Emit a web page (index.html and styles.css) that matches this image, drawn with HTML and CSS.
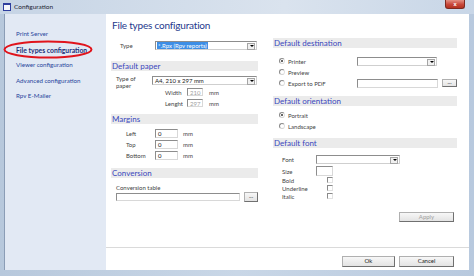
FILE: index.html
```html
<!DOCTYPE html>
<html>
<head>
<meta charset="utf-8">
<link rel="stylesheet" href="styles.css">
</head>
<body>
<div class="window">
  <div class="titlebar">
    <span class="app-icon"></span>
    <span class="title">Configuration</span>
    <span class="spacer"></span>
    <span class="close">x</span>
  </div>
  <div class="body">
    <div class="sidebar">
      <div class="nav">Print Server</div>
      <div class="nav active">File types configuration</div>
      <div class="nav">Viewer configuration</div>
      <div class="nav">Advanced configuration</div>
      <div class="nav">Rpv E-Mailer</div>
    </div>
    <div class="content">
      <div class="columns">
        <div class="col-left">
          <div class="heading">File types configuration</div>
          <div class="type-row">
            <span class="lbl type-lbl">Type</span>
            <div class="combo type-combo"><span class="sel">*.Rpx (Rpv reports)</span></div>
          </div>
          <div class="bar paper-bar">Default paper</div>
          <div class="paper-row">
            <div class="lbl paper-lbl">Type of<br>paper</div>
            <div class="paper-fields">
              <div class="combo paper-combo">A4, 210 x 297 mm</div>
              <div class="dim-row">
                <span class="lbl dim-lbl">Width</span>
                <div class="input dim-input disabled">210</div>
                <span class="lbl unit">mm</span>
              </div>
              <div class="dim-row">
                <span class="lbl dim-lbl">Lenght</span>
                <div class="input dim-input disabled">297</div>
                <span class="lbl unit">mm</span>
              </div>
            </div>
          </div>
          <div class="bar margins-bar">Margins</div>
          <div class="margin-row first">
            <span class="lbl margin-lbl">Left</span>
            <div class="input margin-input">0</div>
            <span class="lbl unit2">mm</span>
          </div>
          <div class="margin-row">
            <span class="lbl margin-lbl">Top</span>
            <div class="input margin-input">0</div>
            <span class="lbl unit2">mm</span>
          </div>
          <div class="margin-row">
            <span class="lbl margin-lbl">Bottom</span>
            <div class="input margin-input">0</div>
            <span class="lbl unit2">mm</span>
          </div>
          <div class="bar conv-bar">Conversion</div>
          <div class="lbl conv-lbl">Conversion table</div>
          <div class="conv-row">
            <div class="input conv-input"></div>
            <div class="btn dots">...</div>
          </div>
        </div>
        <div class="col-right">
          <div class="bar dest-bar">Default destination</div>
          <div class="radio-row first">
            <span class="radio checked"></span><span class="lbl radio-lbl">Printer</span>
            <div class="combo dest-combo"></div>
          </div>
          <div class="radio-row">
            <span class="radio"></span><span class="lbl radio-lbl">Preview</span>
          </div>
          <div class="radio-row">
            <span class="radio"></span><span class="lbl radio-lbl">Export to PDF</span>
            <div class="input pdf-input"></div>
            <div class="btn dots pdf-dots">...</div>
          </div>
          <div class="bar orient-bar">Default orientation</div>
          <div class="radio-row first-o">
            <span class="radio checked"></span><span class="lbl radio-lbl">Portrait</span>
          </div>
          <div class="radio-row">
            <span class="radio"></span><span class="lbl radio-lbl">Landscape</span>
          </div>
          <div class="bar font-bar">Default font</div>
          <div class="font-row">
            <span class="lbl font-lbl">Font</span>
            <div class="combo font-combo"></div>
          </div>
          <div class="size-row">
            <span class="lbl font-lbl">Size</span>
            <div class="input size-input"></div>
          </div>
          <div class="check-row">
            <span class="lbl check-lbl">Bold</span><span class="check"></span>
          </div>
          <div class="check-row">
            <span class="lbl check-lbl">Underline</span><span class="check"></span>
          </div>
          <div class="check-row">
            <span class="lbl check-lbl">Italic</span><span class="check"></span>
          </div>
          <div class="apply-row">
            <div class="btn apply disabled-btn">Apply</div>
          </div>
        </div>
      </div>
      <div class="footer">
        <div class="btn foot-btn ok">Ok</div>
        <div class="btn foot-btn cancel">Cancel</div>
      </div>
    </div>
  </div>
  <svg class="highlight" width="90" height="19" viewBox="0 0 90 19">
    <ellipse cx="45" cy="9.5" rx="43.5" ry="8" fill="none" stroke="#e0141c" stroke-width="2"/>
  </svg>
</div>
</body>
</html>
```
FILE: styles.css
```css
* { box-sizing: border-box; }
html, body { margin: 0; padding: 0; }
body {
  width: 474px;
  height: 276px;
  overflow: hidden;
  font-family: Lato, "Open Sans", "DejaVu Sans", sans-serif;
  background: #a9bdd4;
}
.window {
  position: relative;
  width: 474px;
  height: 276px;
  display: flex;
  flex-direction: column;
  background: linear-gradient(to right, #b7c8dc 0%, #c9d7e7 50%, #b8c9de 100%);
}
.titlebar {
  height: 14px;
  display: flex;
  align-items: flex-start;
  background: linear-gradient(to right, #c6d4e5, #dae3ee 60%, #c8d6e7);
  padding-left: 3px;
}
.app-icon {
  width: 8px;
  height: 8px;
  margin-top: 3px;
  border: 1px solid #2d3d9e;
  border-top-width: 2px;
  background: #f4f6fb;
}
.title {
  font-size: 6.5px;
  line-height: 8px;
  margin-top: 3px;
  color: #1d2533;
  margin-left: 3px;
}
.spacer { flex: 1; }
.close {
  width: 20px;
  height: 9px;
  margin-right: 9px;
  background: linear-gradient(#e39083, #c8473a 55%, #b3321f);
  border: 1px solid #7d2a20;
  border-top: none;
  border-radius: 0 0 3px 3px;
  color: #fff;
  font-size: 6px;
  line-height: 8px;
  text-align: center;
  font-weight: bold;
}
.body {
  flex: 1;
  display: flex;
  margin: 0 5px 6px 4px;
  border-left: 1px solid #8b9db6;
}
.sidebar {
  width: 101px;
  background: #e2e9f4;
  padding: 16px 0 0 11px;
  display: flex;
  flex-direction: column;
  gap: 7.5px;
}
.nav {
  font-size: 6.2px;
  line-height: 8px;
  color: #28469c;
  white-space: nowrap;
}
.nav.active { font-weight: bold; font-size: 6.8px; color: #1b2f78; }
.content {
  flex: 1;
  background: #fff;
  display: flex;
  flex-direction: column;
}
.columns {
  height: 233px;
  display: flex;
  padding-left: 5px;
  gap: 15px;
}
.col-left { width: 147px; display: flex; flex-direction: column; }
.col-right { width: 184px; display: flex; flex-direction: column; }
.lbl {
  font-size: 6px;
  line-height: 7px;
  color: #444;
  white-space: nowrap;
}
.heading {
  margin-top: 5px;
  padding-left: 1px;
  font-size: 10px;
  letter-spacing: -0.2px;
  line-height: 12px;
  color: #24398c;
  white-space: nowrap;
}
.bar {
  height: 10px;
  background: #ebebeb;
  font-size: 8px;
  line-height: 10px;
  color: #3a47bd;
  padding-left: 1px;
  white-space: nowrap;
}
.combo {
  position: relative;
  height: 9px;
  border: 1px solid #8d8d8d;
  border-right-color: #cfcfcf;
  border-bottom-color: #cfcfcf;
  background: #fff;
  font-size: 6px;
  line-height: 7px;
  padding-left: 2px;
  color: #222;
  white-space: nowrap;
}
.combo::after {
  content: "";
  position: absolute;
  right: 1px;
  top: 1px;
  width: 6px;
  height: 5px;
  background: #f0f0f0;
  border: 1px solid #a5a5a5;
}
.combo::before {
  content: "";
  position: absolute;
  right: 2.5px;
  top: 3px;
  z-index: 1;
  border-left: 2px solid transparent;
  border-right: 2px solid transparent;
  border-top: 2px solid #000;
}
.input {
  height: 9px;
  border: 1px solid #8d8d8d;
  border-right-color: #d8d8d8;
  border-bottom-color: #d8d8d8;
  background: #fff;
  font-size: 6px;
  line-height: 7px;
  padding-left: 2px;
  color: #111;
}
.input.disabled { color: #a0a0a0; }
.type-row {
  margin-top: 10px;
  display: flex;
  align-items: center;
  padding-left: 9px;
}
.type-lbl { width: 35px; }
.type-combo { width: 102px; padding-left: 1px; }
.sel {
  background: #3d8ee6;
  color: #fff;
  padding: 0 1px;
}
.paper-bar { margin-top: 11px; }
.paper-row {
  margin-top: 5px;
  display: flex;
  padding-left: 5px;
}
.paper-lbl { width: 36px; margin-top: -1px; }
.paper-fields { width: 105px; }
.paper-combo { width: 105px; }
.dim-row {
  display: flex;
  align-items: center;
  padding-left: 13px;
  margin-top: 3px;
}
.dim-lbl { width: 22px; }
.dim-input { width: 16px; height: 8px; }
.unit { margin-left: 6px; }
.margins-bar { margin-top: 7px; }
.margin-row {
  display: flex;
  align-items: center;
  padding-left: 15px;
  margin-top: 2px;
}
.margin-row.first { margin-top: 5px; }
.margin-lbl { width: 29px; }
.margin-input { width: 23px; }
.unit2 { margin-left: 5px; }
.conv-bar { margin-top: 8px; }
.conv-lbl { margin-top: 6px; padding-left: 5px; }
.conv-row {
  display: flex;
  align-items: center;
  padding-left: 5px;
  margin-top: 1px;
}
.conv-input { width: 124px; height: 8px; }
.btn {
  border: 1px solid #b0b0b0;
  border-right-color: #707070;
  border-bottom-color: #707070;
  background: linear-gradient(#f7f7f7, #e3e3e3);
  font-size: 6px;
  line-height: 8px;
  text-align: center;
  color: #222;
}
.dots { width: 14px; height: 10px; margin-left: 4px; line-height: 5px; }
.pdf-dots { width: 15px; height: 8px; margin-left: 4px; line-height: 4px; }
.dest-bar { margin-top: 24px; }
.radio-row {
  height: 10px;
  display: flex;
  align-items: center;
  padding-left: 6px;
  margin-top: 1px;
}
.radio-row.first { margin-top: 8px; }
.radio-row.first-o { margin-top: 4px; }
.radio {
  width: 6px;
  height: 6px;
  border-radius: 50%;
  border: 1px solid #8a8a8a;
  border-right-color: #e0e0e0;
  border-bottom-color: #d0d0d0;
  background: #fff;
  position: relative;
}
.radio.checked::after {
  content: "";
  position: absolute;
  left: 1px;
  top: 1px;
  width: 2px;
  height: 2px;
  border-radius: 50%;
  background: #333;
}
.radio-lbl { margin-left: 3px; width: 69px; }
.dest-combo { width: 80px; }
.pdf-input { width: 81px; }
.orient-bar { margin-top: 8px; }
.font-bar { margin-top: 7px; }
.font-row {
  display: flex;
  align-items: center;
  padding-left: 9px;
  margin-top: 7px;
}
.font-lbl { width: 34px; }
.font-combo { width: 84px; }
.size-row {
  display: flex;
  align-items: center;
  padding-left: 9px;
  margin-top: 2px;
}
.size-input { width: 17px; height: 10px; }
.check-row {
  height: 8px;
  display: flex;
  align-items: center;
  padding-left: 9px;
}
.check-lbl { width: 45px; }
.check {
  width: 6px;
  height: 6px;
  border: 1px solid #8a8a8a;
  border-right-color: #e2e2e2;
  border-bottom-color: #e2e2e2;
  background: #fff;
}
.apply-row {
  display: flex;
  justify-content: flex-end;
  margin-top: 12px;
  padding-right: 3px;
}
.apply { width: 55px; height: 10px; }
.disabled-btn { color: #a0a0a0; }
.footer {
  flex: 1;
  border-top: 1px solid #dadada;
  display: flex;
  justify-content: flex-end;
  padding: 8px 15px 0 0;
  gap: 4px;
}
.foot-btn { height: 11px; }
.ok { width: 53px; }
.cancel { width: 55px; }
.highlight {
  position: absolute;
  left: 3px;
  top: 40px;
}
```
